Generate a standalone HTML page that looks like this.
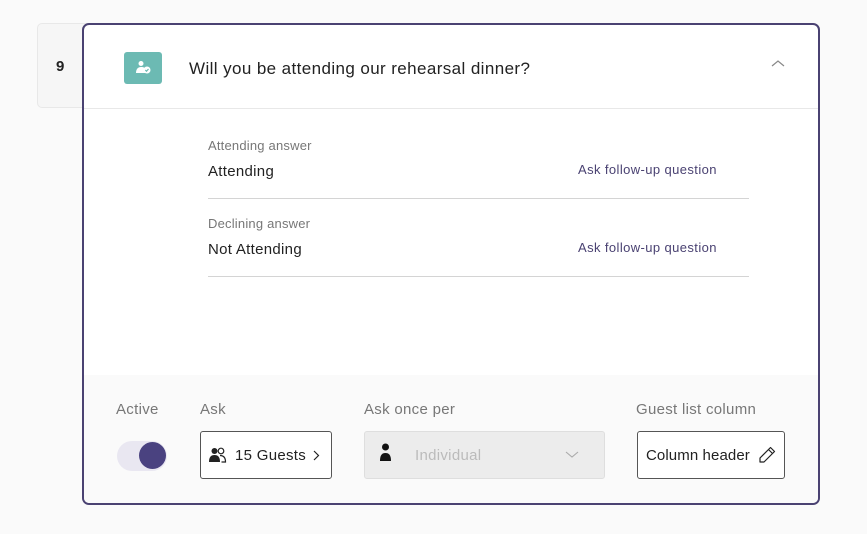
<!DOCTYPE html>
<html><head><style>
*{box-sizing:border-box;margin:0;padding:0}
body{width:867px;height:534px;background:#fafafa;font-family:"Liberation Sans",sans-serif;position:relative;overflow:hidden;color:#222}
.abs{position:absolute}
.tab{left:37px;top:23px;width:60px;height:85px;background:#f6f6f6;border:1px solid #e8e8e8;border-radius:5px}
.card{left:82px;top:23px;width:738px;height:482px;background:#fff;border:2px solid #4a4272;border-radius:7px;overflow:hidden}
.lbl{font-size:13px;color:#777;letter-spacing:0.2px}
.val{font-size:15px;color:#222;letter-spacing:0.3px}
.link{font-size:13px;color:#4a4272;letter-spacing:0.4px}
.line{height:1px;background:#d4d4d4;width:541px;left:124px}
.bl{font-size:15px;color:#777;letter-spacing:0.3px}
.box{border:1px solid #555;border-radius:3px;background:#fff;height:48px}
</style></head><body>
<div class="abs tab"><div class="abs" style="left:18px;top:34px;font-weight:bold;font-size:15px;color:#222">9</div></div>
<div class="abs card">
  <div class="abs" style="left:40px;top:27px;width:38px;height:32px;background:#6cbab3;border-radius:3px">
    <svg class="abs" style="left:12px;top:8px" width="16" height="15" viewBox="0 0 16 15"><circle cx="5" cy="3.5" r="2.5" fill="#fff"/><path d="M0 13c0-4 2-6 5-6s4 1 4.5 2.5V13z" fill="#fff"/><circle cx="11" cy="10" r="3.5" fill="#fff"/><path d="M9.3 10l1.2 1.2 2-2.2" stroke="#6cbab3" stroke-width="1.2" fill="none"/></svg>
  </div>
  <div class="abs" style="left:105px;top:34px;font-size:17px;color:#222;letter-spacing:0.4px">Will you be attending our rehearsal dinner?</div>
  <svg class="abs" style="left:687px;top:34px" width="14" height="9" viewBox="0 0 14 9"><path d="M1 7l6-5 6 5" stroke="#888" stroke-width="1.2" fill="none"/></svg>
  <div class="abs" style="left:0;top:83px;width:738px;height:1px;background:#e8e8e8"></div>
  <div class="abs lbl" style="left:124px;top:113px">Attending answer</div>
  <div class="abs val" style="left:124px;top:138px">Attending</div>
  <div class="abs link" style="left:494px;top:137px">Ask follow-up question</div>
  <div class="abs line" style="top:173px"></div>
  <div class="abs lbl" style="left:124px;top:191px">Declining answer</div>
  <div class="abs val" style="left:124px;top:216px">Not Attending</div>
  <div class="abs link" style="left:494px;top:215px">Ask follow-up question</div>
  <div class="abs line" style="top:251px"></div>
  <div class="abs" style="left:0;top:350px;width:738px;height:135px;background:#fafafa"></div>
  <div class="abs bl" style="left:32px;top:376px">Active</div>
  <div class="abs bl" style="left:116px;top:376px">Ask</div>
  <div class="abs bl" style="left:280px;top:376px">Ask once per</div>
  <div class="abs bl" style="left:552px;top:376px">Guest list column</div>
  <div class="abs" style="left:33px;top:416px;width:50px;height:30px;border-radius:15px;background:#e9e7f1"></div>
  <div class="abs" style="left:55px;top:417px;width:27px;height:27px;border-radius:50%;background:#4a4280"></div>
  <div class="abs box" style="left:116px;top:406px;width:132px">
    <svg class="abs" style="left:8px;top:15px" width="18" height="16" viewBox="0 0 18 16"><circle cx="5.5" cy="4" r="3" fill="#222"/><path d="M0 15c0-5 2-7 5.5-7s5.5 2 5.5 7z" fill="#222"/><circle cx="12" cy="4" r="2.8" stroke="#222" stroke-width="1.2" fill="none"/><path d="M11 8.5c3 0 5.5 1.5 5.5 6.5h-4" stroke="#222" stroke-width="1.2" fill="none"/></svg>
    <div class="abs val" style="left:34px;top:15px">15 Guests</div>
    <svg class="abs" style="left:112px;top:18px" width="7" height="11" viewBox="0 0 7 11"><path d="M1 1l4.5 4.5L1 10" stroke="#222" stroke-width="1.2" fill="none"/></svg>
  </div>
  <div class="abs" style="left:280px;top:406px;width:241px;height:48px;background:#ececec;border:1px solid #dedede;border-radius:3px">
    <svg class="abs" style="left:14px;top:11px" width="13" height="19" viewBox="0 0 13 19"><circle cx="6.5" cy="4" r="3.5" fill="#111"/><path d="M1 18c0-6 2-8 5.5-8s5.5 2 5.5 8z" fill="#111"/></svg>
    <div class="abs" style="left:50px;top:15px;font-size:15px;color:#bbb;letter-spacing:0.3px">Individual</div>
    <svg class="abs" style="left:200px;top:19px" width="14" height="8" viewBox="0 0 14 8"><path d="M1 1l6 5 6-5" stroke="#aaa" stroke-width="1.1" fill="none"/></svg>
  </div>
  <div class="abs box" style="left:553px;top:406px;width:148px">
    <div class="abs val" style="left:8px;top:15px;letter-spacing:0.1px">Column header</div>
    <svg class="abs" style="left:120px;top:14px" width="18" height="18" viewBox="0 0 18 18"><path d="M12.5 1.5l4 4L6 16H2v-4z M10.5 3.5l4 4" stroke="#222" stroke-width="1.2" fill="none" stroke-linejoin="round"/></svg>
  </div>
</div>
</body></html>
